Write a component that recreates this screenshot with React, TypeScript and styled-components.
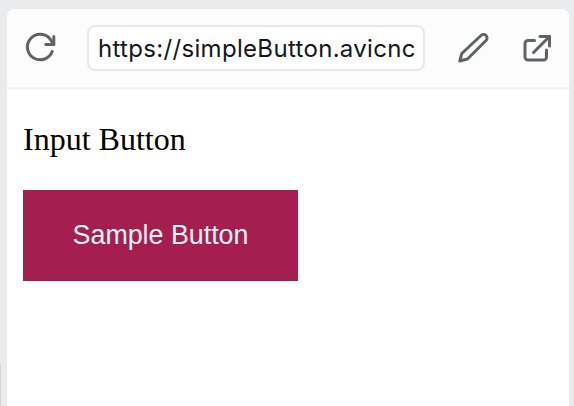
import { createGlobalStyle } from "styled-components";
import styled from "styled-components";

const GlobalStyle = createGlobalStyle`
  html, body {
    margin: 0;
    padding: 0;
    height: 100%;
    overflow: hidden;
    background: #e9ebed;
  }
`;

export default function App() {
  return (
    <>
      <GlobalStyle />
      <Page>
        <Edge />
        <Card>
          <Toolbar>
            <IconButton aria-label="reload">
              <svg width="34" height="34" viewBox="0 0 34 34" fill="none" stroke="#5f6368" strokeWidth="3" strokeLinecap="round" strokeLinejoin="round">
                <path d="M29.2 20.5a12.8 12.8 0 1 1-3-13.6L30.8 13.5" />
                <path d="M30.8 5.5v8h-8" />
              </svg>
            </IconButton>
            <UrlInput readOnly value="https://simpleButton.avicnc.com" />
            <Actions>
              <IconButton aria-label="edit">
                <svg width="34" height="34" viewBox="0 0 34 34" fill="none" stroke="#5f6368" strokeWidth="3" strokeLinecap="round" strokeLinejoin="round">
                  <path d="M25 4.5a3.4 3.4 0 0 1 5 5L11.5 28 3.8 30l2-7.5z" />
                </svg>
              </IconButton>
              <IconButton aria-label="open">
                <svg width="34" height="34" viewBox="0 0 34 34" fill="none" stroke="#5f6368" strokeWidth="3" strokeLinecap="round" strokeLinejoin="round">
                  <path d="M14.5 9.5H8a3 3 0 0 0-3 3V26a3 3 0 0 0 3 3h15.5a3 3 0 0 0 3-3v-7" />
                  <path d="M20 5.5h9.5V15" />
                  <path d="M29.5 5.5 13.5 21.5" />
                </svg>
              </IconButton>
            </Actions>
          </Toolbar>
          <Content>
            <Heading>Input Button</Heading>
            <SampleButton>Sample Button</SampleButton>
          </Content>
        </Card>
      </Page>
    </>
  );
}

const Page = styled.div`
  position: relative;
  width: 574px;
  height: 406px;
  padding: 9px 5px 0 7px;
  box-sizing: border-box;
  overflow: hidden;
  display: flex;
`;

const Edge = styled.div`
  position: absolute;
  left: 0;
  bottom: 0;
  width: 1px;
  height: 41px;
  background: #d3d4d6;
`;

const Card = styled.div`
  flex: 1;
  background: #ffffff;
  border-radius: 8px 8px 0 0;
  display: flex;
  flex-direction: column;
  overflow: hidden;
`;

const Toolbar = styled.div`
  height: 80px;
  flex-shrink: 0;
  box-sizing: border-box;
  display: flex;
  align-items: center;
  padding: 0 12px 0 16px;
  background: #fcfcfc;
  border-bottom: 2px solid #f1f2f3;
`;

const IconButton = styled.div`
  width: 34px;
  height: 34px;
  display: flex;
  align-items: center;
  justify-content: center;
`;

const UrlInput = styled.input`
  width: 338px;
  height: 46px;
  margin-left: 30px;
  box-sizing: border-box;
  padding: 0 8px 0 9px;
  border: 2px solid #e6e7e9;
  border-radius: 8px;
  background: #ffffff;
  color: #14171a;
  font-family: "Inter", sans-serif;
  font-size: 24px;
  letter-spacing: 0.32px;
  outline: none;
`;

const Actions = styled.div`
  display: flex;
  align-items: center;
  gap: 30px;
  margin-left: 31px;
`;

const Content = styled.div`
  display: flex;
  flex-direction: column;
  align-items: flex-start;
  padding: 32px 16px 0;
`;

const Heading = styled.div`
  font-family: "Liberation Serif", serif;
  font-size: 32px;
  line-height: 37px;
  color: #000000;
`;

const SampleButton = styled.button`
  width: 275px;
  height: 91px;
  margin-top: 32px;
  padding: 0;
  border: none;
  background: #a51f4e;
  color: #fdf3f7;
  font-family: "Liberation Sans", sans-serif;
  font-size: 26.8px;
`;
